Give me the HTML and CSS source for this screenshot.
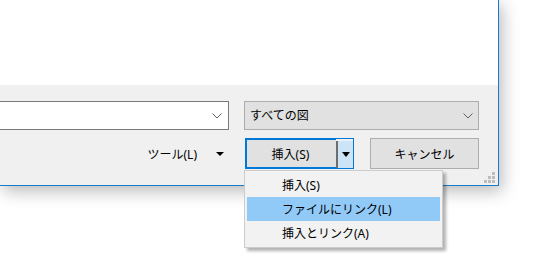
FILE: index.html
```html
<!DOCTYPE html>
<html lang="ja">
<head>
<meta charset="utf-8">
<link rel="stylesheet" href="styles.css">
</head>
<body>
<div class="window">
  <div class="pane"></div>
  <div class="footer">
    <div class="row row-combos">
      <div class="combo combo-name">
        <span class="combo-text"></span>
        <svg class="chev" width="10" height="6" viewBox="0 0 10 6"><polyline points="0.5,0.5 5,5 9.5,0.5" fill="none" stroke="#606060" stroke-width="1"/></svg>
      </div>
      <div class="combo combo-type">
        <span class="combo-text">すべての図</span>
        <svg class="chev" width="10" height="6" viewBox="0 0 10 6"><polyline points="0.5,0.5 5,5 9.5,0.5" fill="none" stroke="#606060" stroke-width="1"/></svg>
      </div>
    </div>
    <div class="row row-buttons">
      <div class="tools">
        <span>ツール(L)</span>
        <span class="tri"></span>
      </div>
      <div class="split">
        <div class="split-main">挿入(S)</div>
        <div class="split-arrow"><span class="tri"></span></div>
      </div>
      <div class="btn">キャンセル</div>
    </div>
    <div class="grip">
      <span class="d d1"></span>
      <span class="d d2"></span><span class="d d3"></span>
      <span class="d d4"></span><span class="d d5"></span><span class="d d6"></span>
    </div>
  </div>
</div>
<div class="menu">
  <div class="item">挿入(S)</div>
  <div class="item hot">ファイルにリンク(L)</div>
  <div class="item">挿入とリンク(A)</div>
</div>
</body>
</html>
```
FILE: styles.css
```css
html, body {
  margin: 0;
  padding: 0;
  background: #ffffff;
  width: 560px;
  height: 280px;
  overflow: hidden;
  font-family: "Noto Sans", "Noto Sans CJK JP", sans-serif;
  font-size: 12px;
  color: #000;
}
.window {
  position: relative;
  width: 498px;
  border-right: 1px solid #1979ca;
  border-bottom: 1px solid #1979ca;
  box-shadow: 3px 5px 16px rgba(0, 0, 0, 0.28);
}
.pane {
  height: 85px;
  background: #ffffff;
}
.footer {
  position: relative;
  height: 100px;
  background: #f0f0f0;
  padding: 16px 19px 0 0;
  box-sizing: border-box;
}
.row {
  display: flex;
  align-items: center;
}
.row-combos {
  height: 29px;
}
.combo {
  box-sizing: border-box;
  height: 29px;
  display: flex;
  align-items: center;
  justify-content: space-between;
  padding: 0 6px 0 5px;
}
.combo-name {
  width: 235px;
  margin-left: -6px;
  background: #fff;
  border: 1px solid #7a7a7a;
}
.combo-type {
  width: 235px;
  margin-left: auto;
  background: #e1e1e1;
  border: 1px solid #adadad;
  padding-right: 5px;
}
.combo-text {
  line-height: 1;
}
.chev {
  display: block;
  margin-top: 1px;
}
.row-buttons {
  margin-top: 8px;
  height: 31px;
  justify-content: flex-end;
}
.tools {
  display: flex;
  align-items: center;
  margin-right: 21px;
}
.tools .tri {
  margin-left: 19px;
}
.tri {
  display: block;
  width: 0;
  height: 0;
  border-left: 4px solid transparent;
  border-right: 4px solid transparent;
  border-top: 4px solid #000;
}
.split {
  display: flex;
  box-sizing: border-box;
  width: 109px;
  height: 31px;
  border: 1px solid #0078d7;
}
.split-main {
  flex: 1;
  display: flex;
  align-items: center;
  justify-content: center;
  background: #e1e1e1;
  border: 1px solid #0078d7;
  border-right: 0;
  padding-right: 2px;
}
.split-arrow {
  width: 17px;
  display: flex;
  align-items: center;
  justify-content: center;
  background: #cce4f7;
  border-left: 2px solid #6d6d6d;
  box-sizing: border-box;
  margin: 2px 0 0;
  height: 27px;
  align-self: flex-start;
}
.split-arrow .tri {
  border-left-width: 4px;
  border-right-width: 4px;
  border-top-width: 5px;
}
.btn {
  box-sizing: border-box;
  width: 109px;
  height: 31px;
  margin-left: 16px;
  display: flex;
  align-items: center;
  justify-content: center;
  background: #e1e1e1;
  border: 1px solid #adadad;
}
.grip {
  position: absolute;
  right: 3px;
  bottom: 2px;
  width: 11px;
  height: 11px;
}
.d {
  position: absolute;
  width: 3px;
  height: 3px;
  background: #bcbcbc;
}
.d1 { left: 8px; top: 0; }
.d2 { left: 4px; top: 4px; }
.d3 { left: 8px; top: 4px; }
.d4 { left: 0; top: 8px; }
.d5 { left: 4px; top: 8px; }
.d6 { left: 8px; top: 8px; }
.menu {
  position: absolute;
  left: 244px;
  top: 170px;
  width: 199px;
  box-sizing: border-box;
  background: #f2f2f2;
  border: 1px solid #cccccc;
  padding: 2px;
  box-shadow: 3px 3px 3px rgba(0, 0, 0, 0.3);
}
.item {
  height: 24px;
  display: flex;
  align-items: center;
  padding-left: 35px;
}
.item.hot {
  background: #91c9f7;
}
```
